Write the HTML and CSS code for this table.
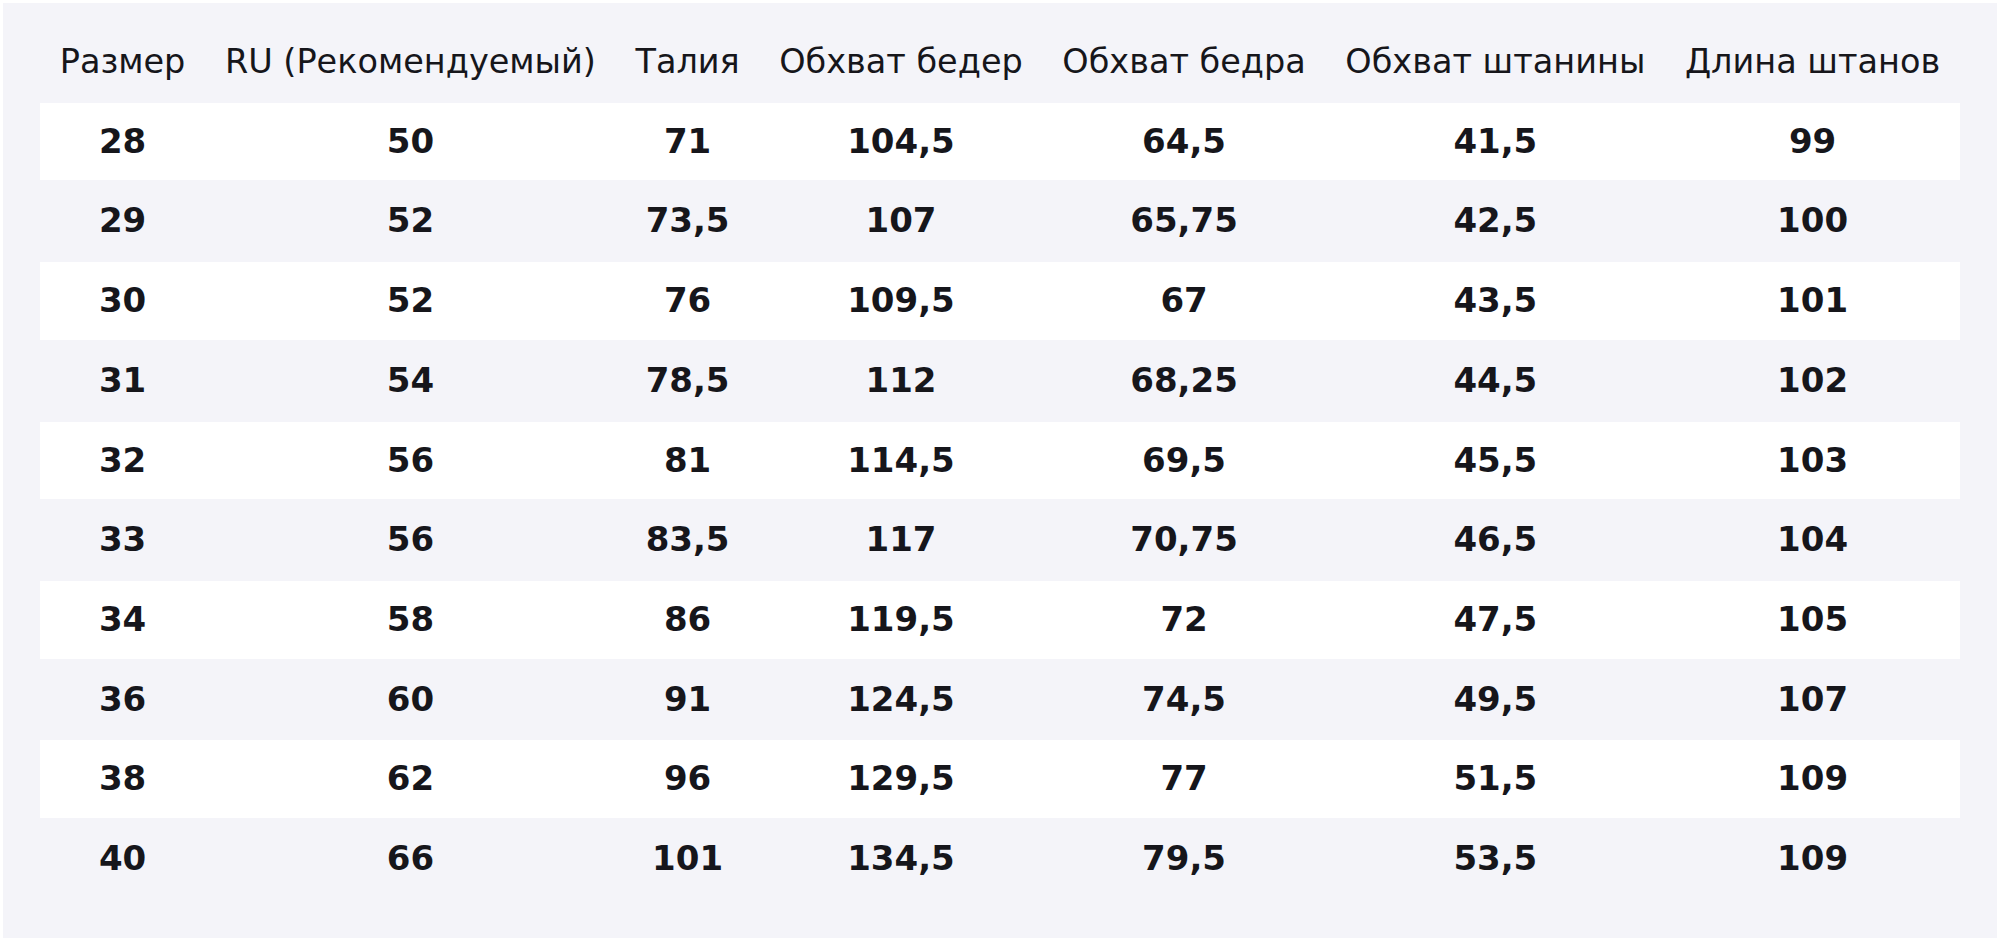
FILE: index.html
```html
<!DOCTYPE html>
<html lang="ru">
<head>
<meta charset="utf-8">
<title>Таблица размеров</title>
<link rel="stylesheet" href="styles.css">
</head>
<body>
<div class="panel">
  <table class="sizes">
    <thead>
      <tr>
        <th>Размер</th>
        <th>RU (Рекомендуемый)</th>
        <th>Талия</th>
        <th>Обхват бедер</th>
        <th>Обхват бедра</th>
        <th>Обхват штанины</th>
        <th>Длина штанов</th>
      </tr>
    </thead>
    <tbody>
      <tr><td>28</td><td>50</td><td>71</td><td>104,5</td><td>64,5</td><td>41,5</td><td>99</td></tr>
      <tr><td>29</td><td>52</td><td>73,5</td><td>107</td><td>65,75</td><td>42,5</td><td>100</td></tr>
      <tr><td>30</td><td>52</td><td>76</td><td>109,5</td><td>67</td><td>43,5</td><td>101</td></tr>
      <tr><td>31</td><td>54</td><td>78,5</td><td>112</td><td>68,25</td><td>44,5</td><td>102</td></tr>
      <tr><td>32</td><td>56</td><td>81</td><td>114,5</td><td>69,5</td><td>45,5</td><td>103</td></tr>
      <tr><td>33</td><td>56</td><td>83,5</td><td>117</td><td>70,75</td><td>46,5</td><td>104</td></tr>
      <tr><td>34</td><td>58</td><td>86</td><td>119,5</td><td>72</td><td>47,5</td><td>105</td></tr>
      <tr><td>36</td><td>60</td><td>91</td><td>124,5</td><td>74,5</td><td>49,5</td><td>107</td></tr>
      <tr><td>38</td><td>62</td><td>96</td><td>129,5</td><td>77</td><td>51,5</td><td>109</td></tr>
      <tr><td>40</td><td>66</td><td>101</td><td>134,5</td><td>79,5</td><td>53,5</td><td>109</td></tr>
    </tbody>
  </table>
</div>
</body>
</html>
```

FILE: styles.css
```css
html, body {
  margin: 0;
  padding: 0;
  background: #ffffff;
}

body {
  padding: 3px;
  font-family: "DejaVu Sans", Verdana, sans-serif;
  color: #16161b;
}

.panel {
  background: #f4f4f9;
  padding: 18px 37px 38px;
}

.sizes {
  width: 100%;
  border-collapse: separate;
  border-spacing: 0 2px;
  font-size: 34px;
}

.sizes th,
.sizes td {
  padding: 19px 19.6px;
  text-align: center;
  white-space: nowrap;
  line-height: 39.7px;
}

.sizes th {
  font-weight: normal;
  font-size: 33.5px;
}

.sizes td {
  font-weight: bold;
}

.sizes tbody tr:nth-child(odd) td {
  background: #ffffff;
}
```
